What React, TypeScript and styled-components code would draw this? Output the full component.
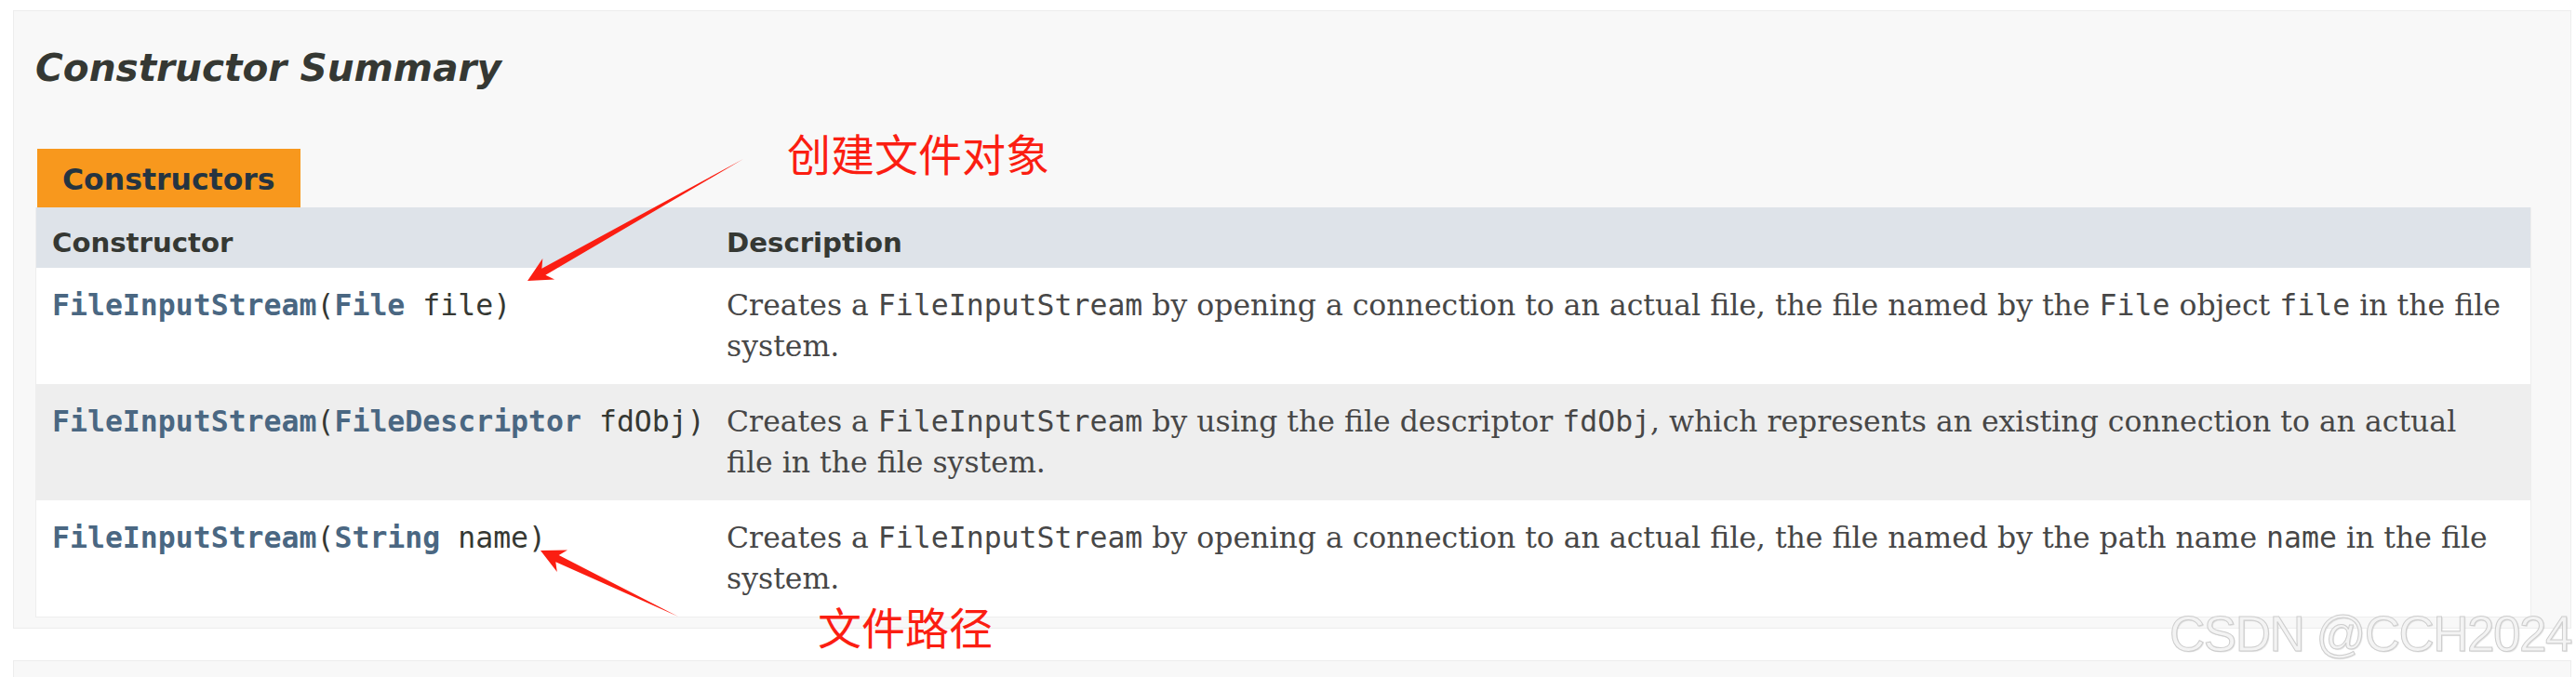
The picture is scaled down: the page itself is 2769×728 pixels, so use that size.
import React from 'react'
import styled, {createGlobalStyle} from 'styled-components'

const GlobalStyle = createGlobalStyle`
    html, body {
        margin: 0;
        padding: 0;
        background: #ffffff;
    }
    body {
        font-family: 'DejaVu Sans', 'Liberation Sans', sans-serif;
        color: #353833;
    }
`

const Page = styled.div`
    position: relative;
    width: 2769px;
    height: 728px;
    box-sizing: border-box;
    padding: 11px 5px 0 14px;
    overflow: hidden;
`

const SummarySection = styled.section`
    background: #f8f8f8;
    border: 1px solid #ededed;
    padding: 0 42px 11px 23px;
`

const SectionTitle = styled.h2`
    margin: 38px 0 64px 0;
    font-family: 'DejaVu Sans', sans-serif;
    font-size: 40.6px;
    line-height: 46px;
    font-weight: bold;
    font-style: italic;
    color: #353833;
`

const Caption = styled.div`
    padding-left: 2px;
    height: 63px;
`

const CaptionTab = styled.span`
    display: inline-block;
    box-sizing: border-box;
    height: 63px;
    padding: 4px 27px 0 27px;
    line-height: 59px;
    background: #f8981d;
    color: #253441;
    font-size: 31.5px;
    font-weight: bold;
    white-space: nowrap;
`

const SummaryTable = styled.div`
    display: grid;
    grid-template-columns: 725px 1fr;
    border: 1px solid #eeeeee;
    border-top: 0;
`

const HeaderCell = styled.div`
    background: #dee3e9;
    padding: 17.6px 6.6px 6.4px 17px;
    font-size: 29.2px;
    line-height: 41px;
    font-weight: bold;
    color: #353833;
`

const ColFirst = styled.div<{ $odd?: boolean }>`
    background: ${p => (p.$odd ? '#eeeeee' : '#ffffff')};
    padding: 17.6px 6.6px 19.4px 17px;
    font-family: 'DejaVu Sans Mono', 'Liberation Mono', monospace;
    font-size: 31.5px;
    line-height: 44px;
    color: #353833;
    white-space: nowrap;
`

const TypeLink = styled.a`
    color: #4a6782;
    font-weight: bold;
    text-decoration: none;
`

const ColLast = styled.div<{ $odd?: boolean }>`
    background: ${p => (p.$odd ? '#eeeeee' : '#ffffff')};
    padding: 17.6px 28px 19.4px 17px;
`

const Block = styled.div`
    font-family: 'DejaVu Serif', 'Liberation Serif', serif;
    font-size: 31.5px;
    line-height: 44px;
    color: #474747;
`

const Code = styled.code`
    font-family: 'DejaVu Sans Mono', 'Liberation Mono', monospace;
    font-size: 31.5px;
    color: #474747;
`

const NextSection = styled.section`
    margin-top: 34px;
    height: 60px;
    background: #f8f8f8;
    border: 1px solid #ededed;
`

const Overlay = styled.svg`
    position: absolute;
    left: 0;
    top: 0;
    pointer-events: none;
`

const Note = styled.div<{ $left: number; $top: number }>`
    position: absolute;
    left: ${p => p.$left}px;
    top: ${p => p.$top}px;
    font-family: 'Noto Sans CJK SC', 'Noto Sans', sans-serif;
    font-size: 47px;
    line-height: 47px;
    color: #fb1e12;
    white-space: nowrap;
`

const Watermark = styled.div`
    position: absolute;
    left: 2332px;
    top: 655px;
    font-family: 'Liberation Sans', Arial, sans-serif;
    font-size: 53px;
    line-height: 53px;
    letter-spacing: -1.5px;
    color: #f3f3f3;
    -webkit-text-stroke: 1px #cdcdcd;
    text-shadow: 1px 1px 1px rgba(0, 0, 0, 0.12);
    white-space: nowrap;
`

const constructors = [
    {
        type: 'File',
        param: 'file',
        desc: (
            <>
                Creates a <Code>FileInputStream</Code> by opening a connection to an actual file, the file
                named by the <Code>File</Code> object <Code>file</Code> in the file system.
            </>
        ),
    },
    {
        type: 'FileDescriptor',
        param: 'fdObj',
        desc: (
            <>
                Creates a <Code>FileInputStream</Code> by using the file descriptor <Code>fdObj</Code>, which
                represents an existing connection to an actual file in the file system.
            </>
        ),
    },
    {
        type: 'String',
        param: 'name',
        desc: (
            <>
                Creates a <Code>FileInputStream</Code> by opening a connection to an actual file, the file
                named by the path name <Code>name</Code> in the file system.
            </>
        ),
    },
]

const App = () => {
    return (
        <Page>
            <GlobalStyle/>
            <SummarySection>
                <SectionTitle>Constructor Summary</SectionTitle>
                <Caption>
                    <CaptionTab>Constructors</CaptionTab>
                </Caption>
                <SummaryTable>
                    <HeaderCell>Constructor</HeaderCell>
                    <HeaderCell>Description</HeaderCell>
                    {constructors.map((c, index) => (
                        <React.Fragment key={index}>
                            <ColFirst $odd={index % 2 === 1}>
                                <TypeLink>FileInputStream</TypeLink>(<TypeLink>{c.type}</TypeLink> {c.param})
                            </ColFirst>
                            <ColLast $odd={index % 2 === 1}>
                                <Block>{c.desc}</Block>
                            </ColLast>
                        </React.Fragment>
                    ))}
                </SummaryTable>
            </SummarySection>
            <NextSection/>

            {/* red annotation arrows */}
            <Overlay width="2769" height="728" viewBox="0 0 2769 728">
                <polygon
                    fill="#fb1e12"
                    points="567,302 596.1,300.5 586.4,295.7 799,171 582.4,288.7 583.3,277.9"
                />
                <polygon
                    fill="#fb1e12"
                    points="581,592 610,591.5 600.7,597 729,663 597.3,604.2 598.8,614.9"
                />
            </Overlay>
            <Note $left={846} $top={140}>创建文件对象</Note>
            <Note $left={879} $top={649}>文件路径</Note>
            <Watermark>CSDN @CCH2024</Watermark>
        </Page>
    )
}

export default App
